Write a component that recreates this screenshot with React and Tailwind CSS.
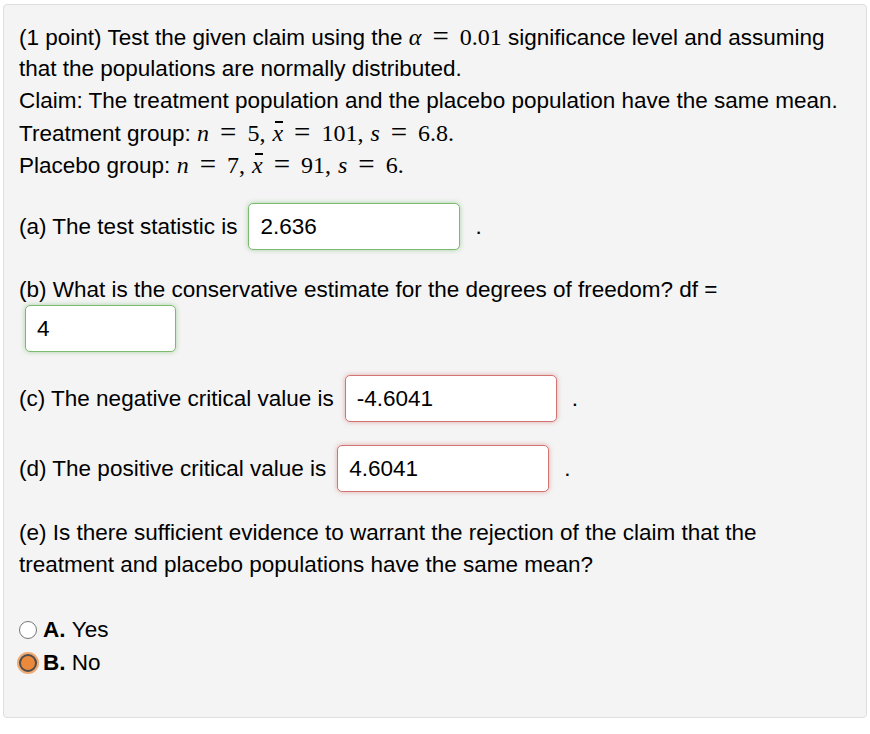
import React from "react";

const sans = { fontFamily: '"Liberation Sans", Arial, Helvetica, sans-serif' };
const serif = { fontFamily: '"Liberation Serif", "Times New Roman", serif' };

function M({ children }) {
  return (
    <span className="text-[24px] leading-none whitespace-nowrap" style={serif}>
      {children}
    </span>
  );
}
function V({ children }) {
  return <i className="italic">{children}</i>;
}
function XBar() {
  return (
    <span className="relative inline-block italic leading-none">
      x
      <span className="absolute left-[3px] right-[0px] top-[0px] h-[1.5px] bg-black" />
    </span>
  );
}
const Eq = () => <span className="relative top-[1px] mx-[11px] text-[29px] leading-none">=</span>;

function Input({ value, color, width, className = "" }) {
  const cls =
    color === "green"
      ? "border-[#7cba70] shadow-[0_0_5px_rgba(110,180,100,0.55)]"
      : "border-[#d27474] shadow-[0_0_5px_rgba(210,110,110,0.55)]";
  return (
    <div
      className={`shrink-0 h-[47px] bg-white border rounded-[5px] flex items-center pl-[11px] text-[22.5px] text-black ${cls} ${className}`}
      style={{ width }}
    >
      {value}
    </div>
  );
}

export default function App() {
  return (
    <div className="bg-white w-[870px] h-[734px] pl-[3px] pt-[4px]" style={sans}>
      <div className="w-[864px] h-[714px] bg-[#f4f4f4] border border-[#dedede] rounded-[4px] pl-[15px] pt-[16px] text-[22.5px] text-black leading-[32px] whitespace-nowrap">
        <div className="h-[32px]">
          (1 point) Test the given claim using the <M><V>α</V><Eq />0.01</M> significance level and assuming
        </div>
        <div className="h-[32px]">that the populations are normally distributed.</div>
        <div className="h-[32px]">Claim: The treatment population and the placebo population have the same mean.</div>
        <div className="h-[32px]">
          Treatment group: <M><V>n</V><Eq />5,<span className="ml-[7px]" /><XBar /><Eq />101,<span className="ml-[7px]" /><V>s</V><Eq />6.8.</M>
        </div>
        <div className="h-[32px]">
          Placebo group: <M><V>n</V><Eq />7,<span className="ml-[7px]" /><XBar /><Eq />91,<span className="ml-[7px]" /><V>s</V><Eq />6.</M>
        </div>

        <div className="flex items-center mt-[22px]">
          <span>(a) The test statistic is</span>
          <Input value="2.636" color="green" width={212} className="ml-[11px]" />
          <span className="ml-[15px]">.</span>
        </div>

        <div className="mt-[24px]">(b) What is the conservative estimate for the degrees of freedom? df =</div>
        <Input value="4" color="green" width={151} className="ml-[6px] mt-[-1px]" />

        <div className="flex items-center mt-[23px]">
          <span>(c) The negative critical value is</span>
          <Input value="-4.6041" color="red" width={212} className="ml-[11px]" />
          <span className="ml-[15px]">.</span>
        </div>

        <div className="flex items-center mt-[23px]">
          <span>(d) The positive critical value is</span>
          <Input value="4.6041" color="red" width={212} className="ml-[11px]" />
          <span className="ml-[15px]">.</span>
        </div>

        <div className="mt-[25px]">
          (e) Is there sufficient evidence to warrant the rejection of the claim that the
          <br />
          treatment and placebo populations have the same mean?
        </div>

        <div className="mt-[33px] flex items-center h-[32px]">
          <span className="w-[18px] h-[18px] rounded-full bg-white border-[1.5px] border-[#767676] mr-[6px]" />
          <b className="font-bold">A.</b>&nbsp;Yes
        </div>
        <div className="flex items-center h-[34px]">
          <span className="w-[18px] h-[18px] rounded-full bg-[#ec8a3c] border-[2px] border-[#4d4d4d] shadow-[0_0_0_2px_rgba(236,138,60,0.7)] mr-[6px]" />
          <b className="font-bold">B.</b>&nbsp;No
        </div>
      </div>
    </div>
  );
}
